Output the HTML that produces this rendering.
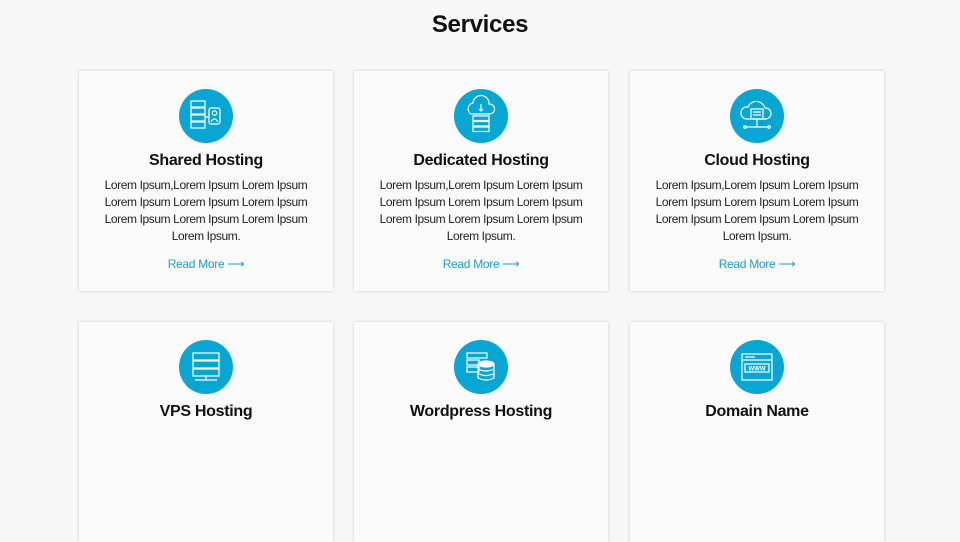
<!DOCTYPE html>
<html><head><style>
body{margin:0;background:#f7f7f7;font-family:"Liberation Sans",sans-serif;width:960px;height:425px;overflow:hidden;position:relative}
h1{position:absolute;top:11px;left:0;width:960px;text-align:center;margin:0;font-size:24px;font-weight:bold;color:#111;letter-spacing:-0.3px}
.card{position:absolute;width:254px;height:220px;background:#fafafa;box-shadow:0 0 3px rgba(0,0,0,.18);text-align:center}
.ic{position:absolute;left:100px;top:18px;width:54px;height:54px;border-radius:50%;background:#08a6d3}
.ic svg{width:54px;height:54px}
.t{position:absolute;top:81px;left:0;width:100%;font-size:16px;font-weight:bold;color:#111;letter-spacing:-0.3px}
.p{position:absolute;top:106px;left:17px;width:220px;font-size:12px;line-height:17px;color:#222;letter-spacing:-0.4px}
.r{position:absolute;top:186px;left:0;width:100%;font-size:12px;color:#19a2cc;letter-spacing:-0.3px}
</style></head><body>
<h1>Services</h1>
<div class="card" style="left:79px;top:71px"><div class="ic"><svg viewBox="0 0 54 54" fill="none" stroke="#fff" stroke-width="1.2"><rect x="12" y="12" width="14" height="6"/><rect x="12" y="19" width="14" height="6"/><rect x="12" y="26" width="14" height="6"/><rect x="12" y="33" width="14" height="6"/><rect x="30" y="19" width="11" height="16" rx="2"/><circle cx="35.5" cy="24" r="2.2"/><path d="M32 33q3.5-6 7 0M26 28h4"/></svg></div><div class="t">Shared Hosting</div><div class="p">Lorem Ipsum,Lorem Ipsum Lorem Ipsum Lorem Ipsum Lorem Ipsum Lorem Ipsum Lorem Ipsum Lorem Ipsum Lorem Ipsum Lorem Ipsum.</div><div class="r">Read More ⟶</div></div>
<div class="card" style="left:354px;top:71px"><div class="ic"><svg viewBox="0 0 54 54" fill="none" stroke="#fff" stroke-width="1.2"><path d="M17 25a6 6 0 0 1 2-11a8 8 0 0 1 16 1a5 5 0 0 1 1 10z"/><path d="M27 15v7M25 20l2 2 2-2"/><rect x="19" y="27" width="16" height="4.5"/><rect x="19" y="32.5" width="16" height="4.5"/><rect x="19" y="38" width="16" height="4.5"/></svg></div><div class="t">Dedicated Hosting</div><div class="p">Lorem Ipsum,Lorem Ipsum Lorem Ipsum Lorem Ipsum Lorem Ipsum Lorem Ipsum Lorem Ipsum Lorem Ipsum Lorem Ipsum Lorem Ipsum.</div><div class="r">Read More ⟶</div></div>
<div class="card" style="left:630px;top:71px"><div class="ic"><svg viewBox="0 0 54 54" fill="none" stroke="#fff" stroke-width="1.2"><path d="M16 30a6 6 0 0 1 2-12a9 9 0 0 1 17 1a5.5 5.5 0 0 1 1 11z"/><rect x="21" y="20" width="12" height="10"/><path d="M23 23h8M23 26h8M27 30v8M15 38h24"/><circle cx="15" cy="38" r="1.3"/><circle cx="39" cy="38" r="1.3"/></svg></div><div class="t">Cloud Hosting</div><div class="p">Lorem Ipsum,Lorem Ipsum Lorem Ipsum Lorem Ipsum Lorem Ipsum Lorem Ipsum Lorem Ipsum Lorem Ipsum Lorem Ipsum Lorem Ipsum.</div><div class="r">Read More ⟶</div></div>
<div class="card" style="left:79px;top:322px"><div class="ic"><svg viewBox="0 0 54 54" fill="none" stroke="#fff" stroke-width="1.2"><rect x="14" y="13" width="26" height="7"/><rect x="14" y="21" width="26" height="7"/><rect x="14" y="29" width="26" height="7"/><path d="M27 36v4M16 40h22"/></svg></div><div class="t">VPS Hosting</div></div>
<div class="card" style="left:354px;top:322px"><div class="ic"><svg viewBox="0 0 54 54" fill="none" stroke="#fff" stroke-width="1.2"><rect x="13" y="13" width="20" height="5"/><rect x="13" y="20" width="12" height="5"/><rect x="13" y="27" width="12" height="5"/><ellipse cx="32" cy="24" rx="8" ry="3" fill="#fff"/><path d="M24 24v14q8 4 16 0V24M24 29q8 4 16 0M24 33.5q8 4 16 0"/></svg></div><div class="t">Wordpress Hosting</div></div>
<div class="card" style="left:630px;top:322px"><div class="ic"><svg viewBox="0 0 54 54" fill="none" stroke="#fff" stroke-width="1.2"><rect x="12" y="14" width="30" height="26"/><path d="M12 20h30M15 17h10"/><rect x="15" y="24" width="24" height="8"/><text x="27" y="30.5" font-size="6" fill="#fff" stroke="none" text-anchor="middle" font-family="Liberation Sans" font-weight="bold">WWW</text></svg></div><div class="t">Domain Name</div></div>
</body></html>
